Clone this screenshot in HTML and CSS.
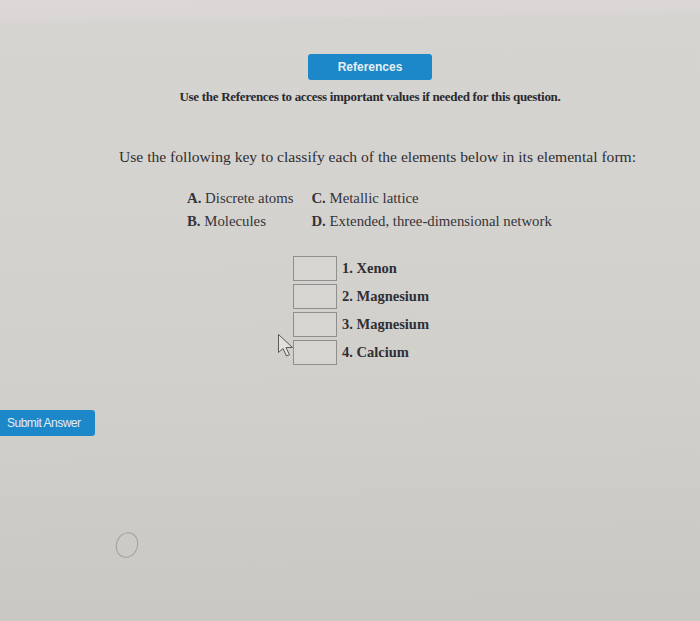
FILE: index.html
```html
<!DOCTYPE html>
<html>
<head>
<meta charset="utf-8">
<link rel="stylesheet" href="styles.css">
</head>
<body>
<div class="page">
  <div class="top">
    <button class="ref-btn">References</button>
    <p class="ref-note">Use the References to access important values if needed for this question.</p>
  </div>
  <p class="instr">Use the following key to classify each of the elements below in its elemental form:</p>
  <div class="key">
    <div class="key-col">
      <span><b>A.</b> Discrete atoms</span>
      <span><b>B.</b> Molecules</span>
    </div>
    <div class="key-col">
      <span><b>C.</b> Metallic lattice</span>
      <span><b>D.</b> Extended, three-dimensional network</span>
    </div>
  </div>
  <div class="items">
    <div class="item"><span class="box"></span><span class="lbl">1. Xenon</span></div>
    <div class="item"><span class="box"></span><span class="lbl">2. Magnesium</span></div>
    <div class="item"><span class="box"></span><span class="lbl">3. Magnesium</span></div>
    <div class="item"><span class="box"></span><span class="lbl">4. Calcium</span>
      <svg class="cursor" width="18" height="25" viewBox="0 0 18 25"><path d="M1.5 1.5 L1.5 19.5 L6 15.5 L9.5 23 L12.5 21.8 L9 14.5 L15.5 14.5 Z" fill="#e2e0dc" stroke="#5a5a5a" stroke-width="1"/></svg>
    </div>
  </div>
  <div class="submit-row">
    <button class="submit-btn">Submit Answer</button>
  </div>
  <div class="smudge"></div>
</div>
</body>
</html>
```
FILE: styles.css
```css
html, body {
  margin: 0;
  padding: 0;
}
body {
  width: 700px;
  height: 621px;
  overflow: hidden;
  background: linear-gradient(179.2deg, #ddd8d8 0px, #dbd6d6 20px, #d6d4d0 24px, #d5d3cf 200px, #d1cfca 400px, #cac8c3 621px);
  font-family: "Liberation Serif", "Times New Roman", serif;
  color: #2b2b2e;
}
.page {
  position: relative;
  height: 621px;
  overflow: hidden;
  display: flex;
  flex-direction: column;
}
.top {
  display: flex;
  flex-direction: column;
  align-items: center;
  padding-top: 54px;
  padding-left: 40px;
}
.ref-btn {
  width: 124px;
  height: 26px;
  border: 0;
  border-radius: 3px;
  background: #1c88c9;
  color: #e6eef4;
  font-family: "Liberation Sans", Arial, sans-serif;
  font-weight: bold;
  font-size: 12px;
  padding: 0;
}
.ref-note {
  margin: 9px 0 0;
  font-weight: bold;
  font-size: 13px;
  line-height: 16px;
  letter-spacing: -0.3px;
  color: #2a2a30;
}
.instr {
  margin: 42px 0 0 119px;
  font-size: 15.6px;
  line-height: 20px;
  color: #2e2e33;
}
.key {
  display: flex;
  gap: 18px;
  margin: 21px 0 0 187px;
  font-size: 14.8px;
  line-height: 20px;
  color: #34343a;
}
.key-col {
  display: flex;
  flex-direction: column;
  gap: 3px;
}
.items {
  display: flex;
  flex-direction: column;
  gap: 3px;
  margin: 25px 0 0 293px;
}
.item {
  position: relative;
  display: flex;
  align-items: center;
  gap: 5px;
  height: 25px;
}
.box {
  width: 42px;
  height: 23px;
  border: 1px solid #8f8f8e;
  background: #d6d5d2;
}
.lbl {
  font-weight: bold;
  font-size: 14.5px;
  color: #2f2f35;
}
.cursor {
  position: absolute;
  left: -16px;
  top: -7px;
}
.submit-row {
  margin-top: 45px;
}
.submit-btn {
  width: 95px;
  height: 26px;
  border: 0;
  border-radius: 0 3px 3px 0;
  background: #1c88c9;
  color: #e3edf3;
  font-family: "Liberation Sans", Arial, sans-serif;
  font-size: 12px;
  letter-spacing: -0.5px;
  padding: 0 0 0 7px;
  text-align: left;
}
.smudge {
  position: absolute;
  left: 116px;
  top: 532px;
  width: 20px;
  height: 24px;
  border: 1px solid rgba(90, 90, 90, 0.35);
  border-radius: 50%;
  transform: rotate(20deg);
}
```
